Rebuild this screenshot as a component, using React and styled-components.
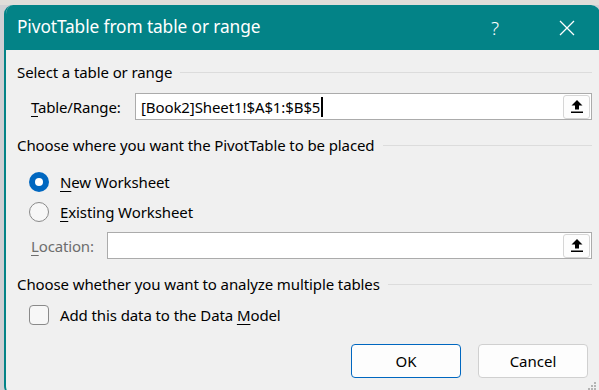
import React from "react";
import styled, { createGlobalStyle } from "styled-components";

const GlobalStyle = createGlobalStyle`
  html, body {
    margin: 0;
    padding: 0;
    background: #e2dfdb;
    font-family: "Noto Sans", "Open Sans", sans-serif;
    overflow: hidden;
  }
`;

const Backdrop = styled.div`
  width: 599px;
  height: 390px;
  padding: 5px 0 0 4px;
  box-sizing: border-box;
  background: linear-gradient(to bottom, #e0ddd9 0, #e0ddd9 5px, #cfd0d4 5px, #cfd0d4 100%);
`;

const Dialog = styled.div`
  position: relative;
  width: 594px;
  height: 390px;
  display: flex;
  flex-direction: column;
  background: #f0f0f0;
  border-left: 2px solid #038387;
  border-radius: 9px 9px 0 9px;
  overflow: hidden;
`;

const TitleBar = styled.div`
  height: 45px;
  flex-shrink: 0;
  display: flex;
  align-items: center;
  background: #038387;
  color: #ffffff;
  padding-left: 11px;
`;

const Title = styled.div`
  flex: 1;
  font-size: 17.3px;
  letter-spacing: -0.1px;
  padding-bottom: 2px;
`;

const TitleButton = styled.div`
  width: ${(p) => p.w}px;
  height: 45px;
  display: flex;
  align-items: center;
  justify-content: center;
  font-size: 19px;
  font-weight: 300;
`;

const Body = styled.div`
  flex: 1;
  display: flex;
  flex-direction: column;
  padding: 12px 8px 0 11px;
  color: #000;
  font-size: 15px;
`;

const SectionHeader = styled.div`
  height: 20px;
  display: flex;
  align-items: center;
  gap: 8px;
  margin-top: ${(p) => p.mt || 0}px;
  letter-spacing: -0.1px;

  &::after {
    content: "";
    flex: 1;
    height: 1px;
    background: #dcdcdc;
  }
`;

const FieldRow = styled.div`
  display: flex;
  align-items: center;
  padding-left: 14px;
  margin-top: ${(p) => p.mt}px;
`;

const Label = styled.div`
  width: ${(p) => p.w}px;
  flex-shrink: 0;
  color: ${(p) => (p.disabled ? "#6d6d6d" : "#000")};
  letter-spacing: -0.15px;
`;

const Key = styled.span`
  text-decoration: underline;
  text-underline-offset: 3px;
  text-decoration-thickness: 1px;
`;

const InputBox = styled.div`
  flex: 1;
  height: 27px;
  box-sizing: border-box;
  display: flex;
  align-items: center;
  background: #ffffff;
  border: 1px solid #ababab;
  padding: 0 1px 0 5px;
`;

const InputText = styled.div`
  flex: 1;
  display: flex;
  align-items: center;
  font-size: 15px;
  letter-spacing: -0.1px;
`;

const Caret = styled.span`
  display: inline-block;
  width: 2px;
  height: 20px;
  background: #000;
  margin-left: 1px;
`;

const RefButton = styled.div`
  width: 27px;
  height: 24px;
  box-sizing: border-box;
  display: flex;
  align-items: center;
  justify-content: center;
  background: #fdfdfd;
  border: 1px solid #d6d6d6;
  border-radius: 3px;
`;

const OptionRow = styled.div`
  display: flex;
  align-items: center;
  height: 22px;
  padding-left: 12px;
  gap: 11px;
  margin-top: ${(p) => p.mt}px;
  letter-spacing: -0.1px;
`;

const Radio = styled.div`
  width: 20px;
  height: 20px;
  box-sizing: border-box;
  border-radius: 50%;
  display: flex;
  align-items: center;
  justify-content: center;
  background: ${(p) => (p.checked ? "#0067c0" : "#f7f7f7")};
  border: ${(p) => (p.checked ? "none" : "1px solid #8a8a8a")};

  &::after {
    content: "";
    display: ${(p) => (p.checked ? "block" : "none")};
    width: 8px;
    height: 8px;
    border-radius: 50%;
    background: #ffffff;
  }
`;

const Checkbox = styled.div`
  width: 20px;
  height: 20px;
  box-sizing: border-box;
  border: 1px solid #8a8a8a;
  border-radius: 4px;
  background: #f7f7f7;
`;

const ButtonRow = styled.div`
  display: flex;
  justify-content: flex-end;
  gap: 17px;
  margin-top: 18px;
  padding-right: 4px;
`;

const Button = styled.div`
  width: 110px;
  height: 34px;
  box-sizing: border-box;
  display: flex;
  align-items: center;
  justify-content: center;
  background: #fdfdfd;
  border: 1px solid ${(p) => (p.primary ? "#0067c0" : "#d0d0d0")};
  border-radius: 4px;
  font-size: 15px;
`;

const Grip = styled.svg`
  position: absolute;
  right: 3px;
  bottom: 1px;
`;

const UploadIcon = () => (
  <svg width="14" height="15" viewBox="0 0 14 15">
    <path d="M7 1 L12.5 6.5 L9 6.5 L9 10.5 L5 10.5 L5 6.5 L1.5 6.5 Z" fill="#000" />
    <rect x="1" y="12.5" width="12" height="1.5" fill="#000" />
  </svg>
);

const CloseIcon = () => (
  <svg width="16" height="16" viewBox="0 0 16 16">
    <path d="M1 1 L15 15 M15 1 L1 15" stroke="#fff" strokeWidth="1.3" />
  </svg>
);

const App = () => {
  return (
    <>
      <GlobalStyle />
      <Backdrop>
        <Dialog>
          <TitleBar>
            <Title>PivotTable from table or range</Title>
            <TitleButton w={78}>?</TitleButton>
            <TitleButton w={66}>
              <CloseIcon />
            </TitleButton>
          </TitleBar>
          <Body>
            <SectionHeader>Select a table or range</SectionHeader>
            <FieldRow mt={11}>
              <Label w={104}>
                <Key>T</Key>able/Range:
              </Label>
              <InputBox>
                <InputText>
                  [Book2]Sheet1!$A$1:$B$5
                  <Caret />
                </InputText>
                <RefButton>
                  <UploadIcon />
                </RefButton>
              </InputBox>
            </FieldRow>
            <SectionHeader mt={15}>
              Choose where you want the PivotTable to be placed
            </SectionHeader>
            <OptionRow mt={16}>
              <Radio checked />
              <span>
                <Key>N</Key>ew Worksheet
              </span>
            </OptionRow>
            <OptionRow mt={8}>
              <Radio />
              <span>
                <Key>E</Key>xisting Worksheet
              </span>
            </OptionRow>
            <FieldRow mt={9}>
              <Label w={76} disabled>
                <Key>L</Key>ocation:
              </Label>
              <InputBox>
                <InputText />
                <RefButton>
                  <UploadIcon />
                </RefButton>
              </InputBox>
            </FieldRow>
            <SectionHeader mt={15}>
              Choose whether you want to analyze multiple tables
            </SectionHeader>
            <OptionRow mt={10}>
              <Checkbox />
              <span>
                Add this data to the Data <Key>M</Key>odel
              </span>
            </OptionRow>
            <ButtonRow>
              <Button primary>OK</Button>
              <Button>Cancel</Button>
            </ButtonRow>
          </Body>
          <Grip width="12" height="12" viewBox="0 0 12 12">
            <g fill="#b4b4b4">
              <rect x="9" y="0" width="2" height="2" />
              <rect x="6" y="3" width="2" height="2" />
              <rect x="9" y="3" width="2" height="2" />
              <rect x="3" y="6" width="2" height="2" />
              <rect x="6" y="6" width="2" height="2" />
              <rect x="9" y="6" width="2" height="2" />
            </g>
          </Grip>
        </Dialog>
      </Backdrop>
    </>
  );
};

export default App;
